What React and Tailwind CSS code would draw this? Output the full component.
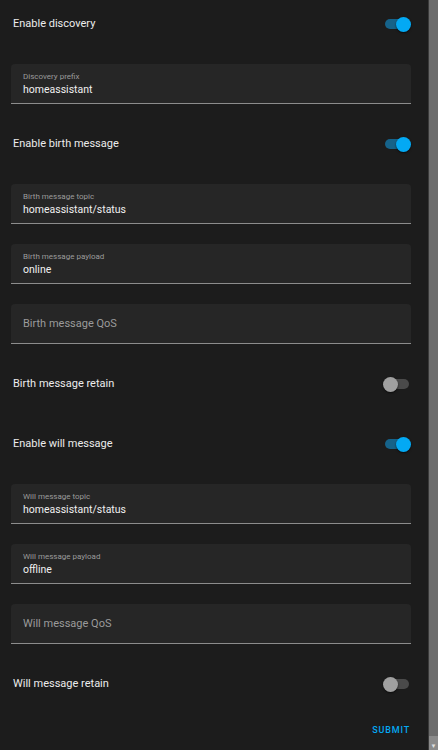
import React, { useState } from 'react';

const Toggle = ({ on, onChange }) => (
  <button onClick={onChange} className="relative w-[28px] h-[16px] flex items-center shrink-0">
    <span className={`absolute left-[2px] w-[24px] h-[10px] rounded-full ${on ? 'bg-[#16638a]' : 'bg-[#4a4a4a]'}`}></span>
    <span
      className={`absolute top-[1px] w-[15px] h-[15px] rounded-full shadow-[0_1px_2px_rgba(0,0,0,0.6)] ${on ? 'left-[13px] bg-[#03a9f4]' : 'left-0 bg-[#a0a0a0]'}`}
    ></span>
  </button>
);

const SwitchRow = ({ label, on, onChange }) => (
  <div className="h-[40px] flex items-center justify-between pl-[13px]">
    <span className="text-[11px] text-[#ececec]">{label}</span>
    <Toggle on={on} onChange={onChange} />
  </div>
);

const Field = ({ label, value }) => (
  <div className="h-[40px] ml-[11px] bg-[#262626] rounded-t-[4px] border-b border-[#8c8c8c] px-[12px] pt-[1px] flex flex-col justify-center">
    {value ? (
      <>
        <span className="text-[8px] leading-[11px] text-[#9b9b9b]">{label}</span>
        <span className="text-[10.5px] leading-[15px] text-[#f0f0f0]">{value}</span>
      </>
    ) : (
      <span className="text-[11px] text-[#9b9b9b]">{label}</span>
    )}
  </div>
);

export default function App() {
  const [sw, setSw] = useState({ discovery: true, birth: true, birthRetain: false, will: true, willRetain: false });
  const flip = (k) => setSw({ ...sw, [k]: !sw[k] });

  return (
    <div className="w-[438px] h-[750px] bg-[#1c1c1c] flex overflow-hidden" style={{ fontFamily: 'Roboto, "Noto Sans", sans-serif' }}>
      <div className="w-[428px] h-full flex flex-col">
        <div className="w-[411px] flex flex-col gap-[20px] pt-[4px]">
          <SwitchRow label="Enable discovery" on={sw.discovery} onChange={() => flip('discovery')} />
          <Field label="Discovery prefix" value="homeassistant" />
          <SwitchRow label="Enable birth message" on={sw.birth} onChange={() => flip('birth')} />
          <Field label="Birth message topic" value="homeassistant/status" />
          <Field label="Birth message payload" value="online" />
          <Field label="Birth message QoS" />
          <SwitchRow label="Birth message retain" on={sw.birthRetain} onChange={() => flip('birthRetain')} />
          <SwitchRow label="Enable will message" on={sw.will} onChange={() => flip('will')} />
          <Field label="Will message topic" value="homeassistant/status" />
          <Field label="Will message payload" value="offline" />
          <Field label="Will message QoS" />
          <SwitchRow label="Will message retain" on={sw.willRetain} onChange={() => flip('willRetain')} />
        </div>
        <div className="w-[411px] flex justify-end mt-[14px]">
          <button className="text-[9px] font-medium tracking-[0.09em] text-[#03a9f4] px-[1px] py-[6px]">SUBMIT</button>
        </div>
      </div>
      <div className="w-[10px] h-full flex flex-col border-l border-[#3a3a3a]">
        <div className="flex-1 bg-[#6c6c6c]"></div>
        <div className="h-[14px] bg-[#8a8a8a] flex items-end justify-center text-[6px] leading-[8px] text-[#e0e0e0]">▼</div>
      </div>
    </div>
  );
}
